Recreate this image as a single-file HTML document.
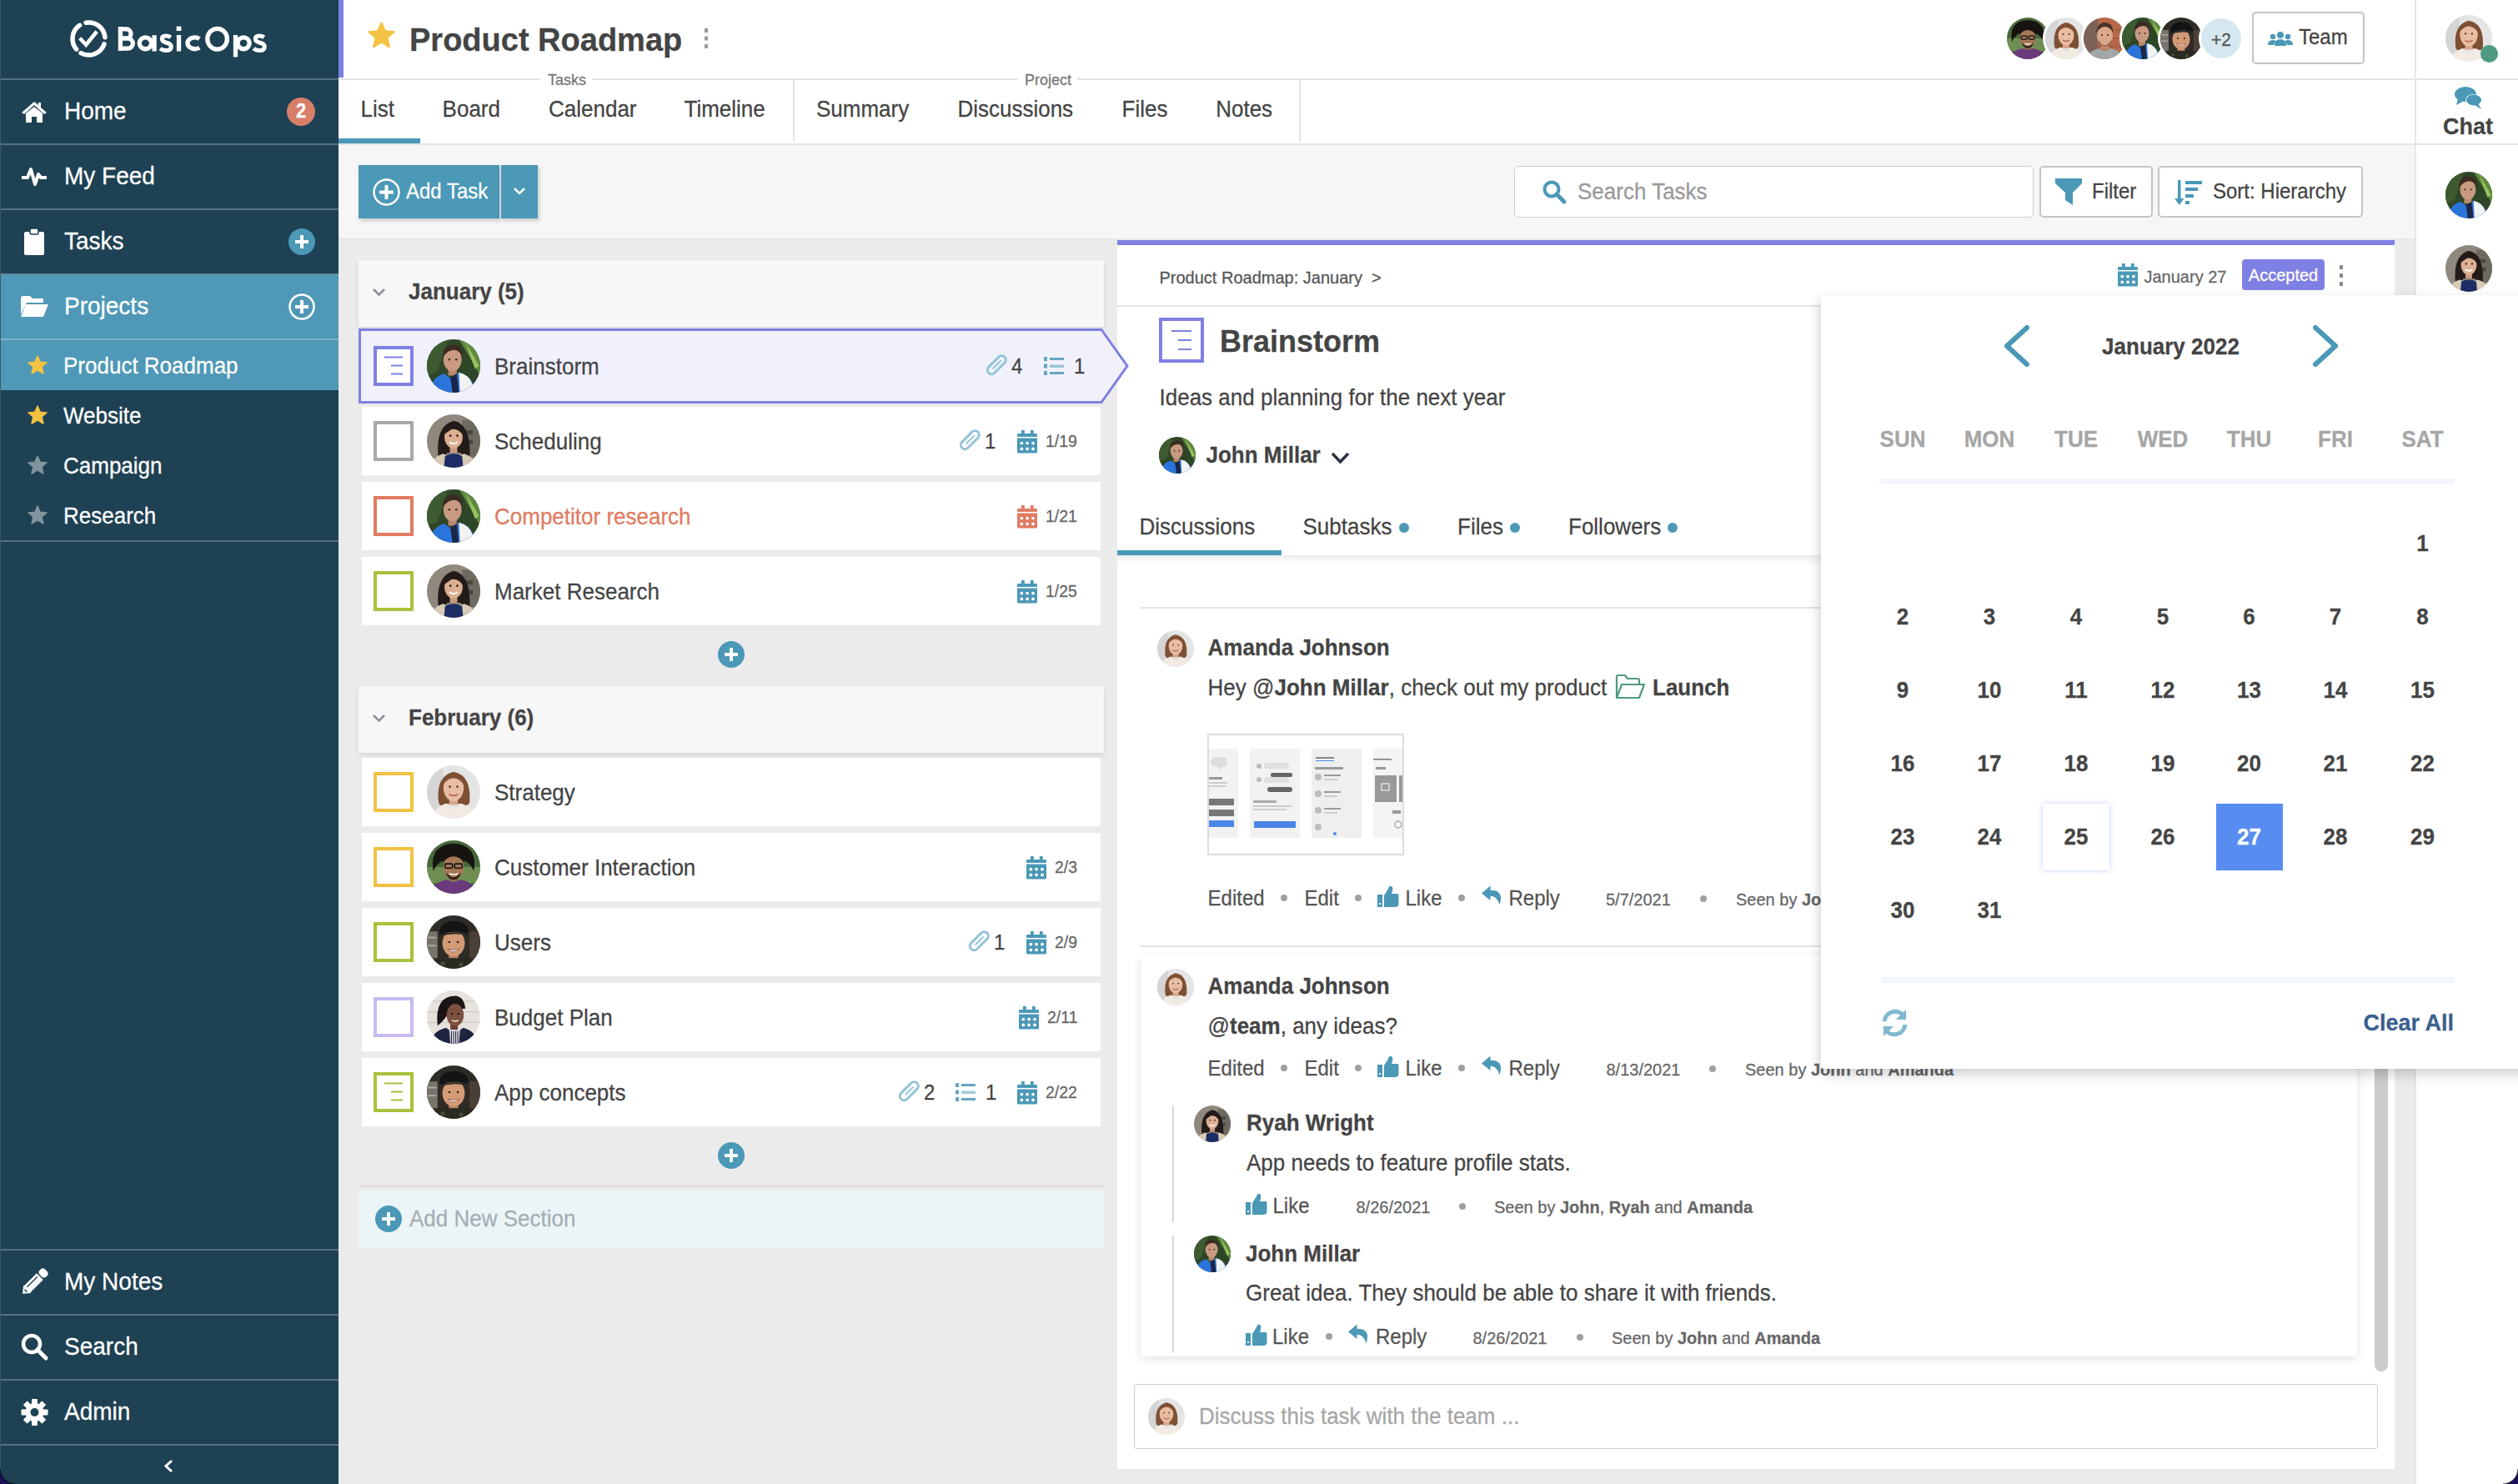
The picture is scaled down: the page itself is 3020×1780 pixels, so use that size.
<!DOCTYPE html><html><head><meta charset="utf-8"><style>
html,body{margin:0;padding:0;}
body{width:3020px;height:1780px;position:relative;overflow:hidden;background:#ebebeb;font-family:"Liberation Sans",sans-serif;}
.t{position:absolute;white-space:nowrap;line-height:1;transform:scaleY(1.045);transform-origin:0 84.65%;-webkit-text-stroke:0.25px currentColor;}
svg{overflow:visible}
</style></head><body>
<svg width="0" height="0" style="position:absolute"><defs>
<clipPath id="cc"><circle cx="50" cy="50" r="50"/></clipPath>
<g id="av-john" clip-path="url(#cc)"><rect width="100" height="100" fill="#2e4628"/><path d="M0 0 H40 L20 60 L0 70Z" fill="#3d5a30"/><path d="M60 0 H100 V70 Q85 40 60 0Z" fill="#5f8a3e"/><path d="M72 5 L98 50 L90 55 Z" fill="#a9cf6a" opacity=".8"/><path d="M82 0 L100 30 L100 12Z" fill="#c8e08a" opacity=".7"/><rect x="40" y="52" width="16" height="16" fill="#b8876c"/><ellipse cx="48" cy="38" rx="17" ry="22" fill="#c99a80"/><path d="M30 34 Q28 10 50 10 Q70 12 66 34 Q64 22 52 20 Q38 20 30 34Z" fill="#3b2b22"/><circle cx="42" cy="38" r="2" fill="#3a2a22"/><circle cx="55" cy="38" r="2" fill="#3a2a22"/><path d="M4 100 Q8 72 32 64 L46 74 L60 62 Q86 68 92 100Z" fill="#2b74dc"/><path d="M60 62 Q80 66 86 86 L74 100 L62 100 Z" fill="#f2f2f2"/><path d="M44 72 L56 64 L60 100 L48 100Z" fill="#1b2746"/></g>
<g id="av-amanda" clip-path="url(#cc)"><rect width="100" height="100" fill="#e4e4e4"/><rect x="0" y="0" width="30" height="100" fill="#d5d5d5"/><path d="M22 70 Q16 20 50 12 Q84 18 80 70 Q74 80 66 72 L34 72 Q26 80 22 70Z" fill="#7e4f33"/><rect x="42" y="58" width="16" height="16" fill="#d9a68a"/><ellipse cx="50" cy="42" rx="19" ry="25" fill="#e8bda2"/><path d="M31 36 Q34 16 52 16 Q68 18 70 38 Q62 24 48 24 Q38 26 31 36Z" fill="#7e4f33"/><circle cx="43" cy="40" r="2" fill="#4a3025"/><circle cx="57" cy="40" r="2" fill="#4a3025"/><path d="M42 54 Q50 60 58 54" stroke="#b45a50" stroke-width="2.5" fill="none"/><path d="M10 100 Q14 78 36 72 L50 84 L64 72 Q86 78 90 100Z" fill="#f1ebe4"/></g>
<g id="av-ryah" clip-path="url(#cc)"><rect width="100" height="100" fill="#8e887d"/><rect x="66" y="10" width="34" height="70" fill="#6e6a62"/><rect x="72" y="30" width="14" height="8" fill="#4a4640"/><rect x="72" y="48" width="14" height="8" fill="#4a4640"/><path d="M22 86 Q14 22 50 12 Q84 18 80 86 Q70 96 64 72 L38 72 Q30 96 22 86Z" fill="#221b19"/><rect x="43" y="58" width="14" height="14" fill="#c99a80"/><ellipse cx="50" cy="42" rx="17" ry="22" fill="#dcae92"/><path d="M32 38 Q34 18 52 18 Q66 20 68 40 Q60 26 46 28Z" fill="#221b19"/><circle cx="44" cy="40" r="2" fill="#2a1a15"/><circle cx="57" cy="40" r="2" fill="#2a1a15"/><path d="M42 52 Q50 58 58 52" stroke="#fff" stroke-width="3" fill="none"/><path d="M6 100 Q10 80 30 74 L50 80 L70 74 Q90 80 94 100Z" fill="#d8cbb5"/><path d="M34 78 Q50 70 66 78 L68 100 L32 100Z" fill="#1d2d66"/></g>
<g id="av-curly" clip-path="url(#cc)"><rect width="100" height="100" fill="#48683a"/><rect x="0" y="50" width="100" height="30" fill="#8aa866" opacity=".6"/><path d="M12 58 Q4 8 50 6 Q96 8 88 58 Q80 36 50 32 Q20 36 12 58Z" fill="#161311"/><rect x="42" y="62" width="16" height="14" fill="#94684a"/><ellipse cx="50" cy="50" rx="19" ry="23" fill="#a67756"/><path d="M30 42 Q30 18 50 18 Q72 18 70 42 Q62 30 50 30 Q38 30 30 42Z" fill="#161311"/><rect x="34" y="44" width="14" height="8" rx="2" fill="none" stroke="#111" stroke-width="2.5"/><rect x="52" y="44" width="14" height="8" rx="2" fill="none" stroke="#111" stroke-width="2.5"/><path d="M36 60 Q50 78 64 60 Q62 72 50 74 Q38 72 36 60Z" fill="#2a1e18"/><path d="M42 62 Q50 66 58 62" stroke="#fff" stroke-width="2.5" fill="none"/><path d="M4 100 Q10 80 36 74 L50 78 L64 74 Q90 80 96 100Z" fill="#6a3a7c"/></g>
<g id="av-cap" clip-path="url(#cc)"><rect width="100" height="100" fill="#2f2b27"/><rect x="0" y="30" width="20" height="50" fill="#77756a"/><rect x="2" y="40" width="16" height="3" fill="#aaa"/><rect x="2" y="55" width="16" height="3" fill="#aaa"/><rect x="80" y="30" width="20" height="50" fill="#4a4038"/><rect x="41" y="66" width="18" height="14" fill="#b98060"/><ellipse cx="50" cy="52" rx="21" ry="25" fill="#d39a76"/><path d="M24 36 Q22 12 50 11 Q78 11 78 34 Q50 27 24 36Z" fill="#141414"/><path d="M24 36 Q50 28 78 34 L78 38 Q50 31 24 40Z" fill="#2a2a2a"/><circle cx="42" cy="50" r="2" fill="#2a1a15"/><circle cx="58" cy="50" r="2" fill="#2a1a15"/><path d="M39 63 Q50 74 61 63 Q50 67 39 63Z" fill="#fff" stroke="#7a3a30" stroke-width="1"/><path d="M6 100 Q12 82 34 78 L50 84 L66 78 Q88 82 94 100Z" fill="#2a2a20"/><circle cx="30" cy="90" r="4" fill="#4a4a38"/><circle cx="64" cy="92" r="4" fill="#4a4a38"/></g>
<g id="av-budget" clip-path="url(#cc)"><rect width="100" height="100" fill="#e6e2dd"/><path d="M0 20 H100 M0 40 H100 M0 60 H100" stroke="#cfcac4" stroke-width="2"/><path d="M20 66 Q14 10 54 10 Q70 12 72 34 L44 36 Q34 56 20 66Z" fill="#1a1414"/><rect x="44" y="60" width="14" height="14" fill="#6a4032"/><ellipse cx="53" cy="46" rx="16" ry="21" fill="#7d5040"/><circle cx="47" cy="44" r="1.8" fill="#1a0e0a"/><circle cx="59" cy="44" r="1.8" fill="#1a0e0a"/><path d="M47 56 Q53 60 59 56" stroke="#fff" stroke-width="2" fill="none"/><path d="M6 100 Q10 76 36 70 L52 82 L68 70 Q92 76 96 100Z" fill="#1f2440"/><path d="M42 74 L62 74 L60 100 L44 100Z" fill="#e3e6ee"/><path d="M46 76 L46 100 M50 76 L50 100 M54 76 L54 100 M58 76 L58 100" stroke="#2a2a3a" stroke-width="1.8"/></g>
<g id="av-beard" clip-path="url(#cc)"><rect width="100" height="100" fill="#b7694a"/><path d="M0 30 H100 M0 50 H100 M0 70 H100" stroke="#8e4e36" stroke-width="2"/><rect x="0" y="0" width="34" height="100" fill="#7a6258"/><rect x="42" y="60" width="18" height="16" fill="#c49070"/><ellipse cx="51" cy="44" rx="19" ry="25" fill="#dba98a"/><path d="M31 36 Q32 12 52 12 Q72 14 70 36 Q64 22 50 22 Q38 24 31 36Z" fill="#4a3428"/><circle cx="44" cy="42" r="2" fill="#2a1a15"/><circle cx="58" cy="42" r="2" fill="#2a1a15"/><path d="M34 52 Q51 82 68 52 Q66 68 51 70 Q36 68 34 52Z" fill="#7e5e4c"/><path d="M6 100 Q12 80 36 74 L51 80 L66 74 Q90 80 94 100Z" fill="#a2a6a8"/></g>
</defs></svg>
<div style="position:absolute;left:0px;top:0px;width:406px;height:1780px;background:#1e4153;"></div>
<svg style="position:absolute;left:0px;top:0px;" width="340" height="90" viewBox="0 0 340 90"><g fill="none" stroke="#fff" stroke-linecap="round"><path d="M103.11 27.30 A19.5 19.5 0 0 1 125.93 44.80 M124.94 52.85 A19.5 19.5 0 0 1 97.05 63.56 M95.60 30.33 A19.5 19.5 0 0 0 91.56 59.03" stroke-width="5.5"/></g><path d="M95.7 45.8 L103.2 53.8 L116.1 37.8" stroke="#fff" stroke-width="4.6" fill="none"/><g fill="none" stroke="#fff" stroke-width="5.3"><path d="M144.4 32 V61 M141.8 34.9 H151.5 A5.55 5.55 0 0 1 151.5 46 H141.8 M151.5 46 H153.3 A6.05 6.05 0 0 1 153.3 58.1 H141.8"/><ellipse cx="174.4" cy="51.85" rx="7.2" ry="6.9"/><path d="M185.1 42.2 V61.5"/><path d="M204.8 44.8 Q202 42.9 199.2 42.9 Q194.3 42.9 194.3 46.6 Q194.3 50 199.6 51.2 Q205.3 52.5 205.3 56.3 Q205.3 60.6 199.4 60.6 Q195 60.6 192.2 58" stroke-width="5"/><path d="M214.5 42 V61.5"/><path d="M239.2 46.6 A8.6 6.9 0 1 0 239.2 57.1"/><ellipse cx="260.6" cy="46.7" rx="11.8" ry="12.4"/><path d="M282.5 42 V68.4"/><ellipse cx="292.1" cy="51.85" rx="7.1" ry="6.9"/><path d="M316.8 44.8 Q314 42.9 311.2 42.9 Q306.3 42.9 306.3 46.6 Q306.3 50 311.6 51.2 Q317.3 52.5 317.3 56.3 Q317.3 60.6 311.4 60.6 Q307 60.6 304.2 58" stroke-width="5"/></g><rect x="211.6" y="31.6" width="5.8" height="5.4" fill="#fff"/></svg>
<div style="position:absolute;left:0px;top:94px;width:406px;height:2px;background:#56717f;"></div>
<div style="position:absolute;left:0px;top:172px;width:406px;height:2px;background:#56717f;"></div>
<div style="position:absolute;left:0px;top:250px;width:406px;height:2px;background:#56717f;"></div>
<div style="position:absolute;left:0px;top:328px;width:406px;height:140px;background:#4f98b7;"></div>
<div style="position:absolute;left:0px;top:328px;width:406px;height:2px;background:#5f8a9c;"></div>
<div style="position:absolute;left:0px;top:406px;width:406px;height:2px;background:#7eb3c8;"></div>
<div style="position:absolute;left:0px;top:648px;width:406px;height:2px;background:#56717f;"></div>
<div style="position:absolute;left:0px;top:1498px;width:406px;height:2px;background:#56717f;"></div>
<div style="position:absolute;left:0px;top:1576px;width:406px;height:2px;background:#56717f;"></div>
<div style="position:absolute;left:0px;top:1654px;width:406px;height:2px;background:#56717f;"></div>
<div style="position:absolute;left:0px;top:1732px;width:406px;height:2px;background:#56717f;"></div>
<div class="t" style="left:77px;top:120.3px;font-size:28px;font-weight:400;color:#fff;">Home</div>
<div class="t" style="left:77px;top:198.3px;font-size:28px;font-weight:400;color:#fff;">My Feed</div>
<div class="t" style="left:77px;top:276.3px;font-size:28px;font-weight:400;color:#fff;">Tasks</div>
<div class="t" style="left:77px;top:354.3px;font-size:28px;font-weight:400;color:#fff;">Projects</div>
<div class="t" style="left:76px;top:426.0px;font-size:26px;font-weight:400;color:#fff;">Product Roadmap</div>
<div class="t" style="left:76px;top:486.0px;font-size:26px;font-weight:400;color:#fff;">Website</div>
<div class="t" style="left:76px;top:546.0px;font-size:26px;font-weight:400;color:#fff;">Campaign</div>
<div class="t" style="left:76px;top:606.0px;font-size:26px;font-weight:400;color:#fff;">Research</div>
<div class="t" style="left:77px;top:1524.3px;font-size:28px;font-weight:400;color:#fff;">My Notes</div>
<div class="t" style="left:77px;top:1602.3px;font-size:28px;font-weight:400;color:#fff;">Search</div>
<div class="t" style="left:77px;top:1680.3px;font-size:28px;font-weight:400;color:#fff;">Admin</div>
<div style="position:absolute;left:344px;top:117px;width:34px;height:34px;border-radius:50%;background:#d97f69;"></div>
<div class="t" style="left:-139px;width:1000px;text-align:center;top:123.4px;font-size:22px;font-weight:700;color:#fff;">2</div>
<svg style="position:absolute;left:346px;top:274px;" width="32" height="32" viewBox="0 0 32 32"><circle cx="16" cy="16" r="16" fill="#4b98b7"/><path d="M16 8 V24 M8 16 H24" stroke="#fff" stroke-width="4"/></svg>
<svg style="position:absolute;left:346px;top:352px;" width="32" height="32" viewBox="0 0 32 32"><circle cx="16" cy="16" r="14.5" fill="none" stroke="#fff" stroke-width="2.5"/><path d="M16 8 V24 M8 16 H24" stroke="#fff" stroke-width="4"/></svg>
<svg style="position:absolute;left:25px;top:120px;" width="32" height="28" viewBox="0 0 32 28"><path d="M16 2 L1 15 L4 17 L16 6 L28 17 L31 15 L24 9 V3 H21 V6 Z" fill="#fff"/><path d="M6 16 L16 8 L26 16 V27 H19 V20 H13 V27 H6 Z" fill="#fff"/></svg>
<svg style="position:absolute;left:25px;top:199px;" width="32" height="26" viewBox="0 0 32 26"><path d="M1 14 H8 L12 4 L17 22 L21 10 L24 14 H31" stroke="#fff" stroke-width="4" fill="none" stroke-linejoin="round"/></svg>
<svg style="position:absolute;left:29px;top:273px;" width="25" height="33" viewBox="0 0 25 33"><rect x="0" y="5" width="24" height="28" rx="2" fill="#fff"/><rect x="7" y="1" width="10" height="7" rx="2" fill="#fff" stroke="#1e4153" stroke-width="1.5"/></svg>
<svg style="position:absolute;left:25px;top:355px;" width="33" height="25" viewBox="0 0 33 25"><path d="M0 3 Q0 0 3 0 H11 L14 3 H27 V8 H7 L0 22Z" fill="#fff"/><path d="M6 10 H33 L27 25 H0Z" fill="#fff"/></svg>
<svg style="position:absolute;left:33px;top:426px;" width="24" height="24" viewBox="0 0 24 24"><path d="M12 1 L15.2 8.2 L23 8.9 L17.1 14 L18.9 22 L12 17.8 L5.1 22 L6.9 14 L1 8.9 L8.8 8.2Z" fill="#f4c242" stroke="#f4c242" stroke-width="1.5" stroke-linejoin="round"/></svg>
<svg style="position:absolute;left:33px;top:486px;" width="24" height="24" viewBox="0 0 24 24"><path d="M12 1 L15.2 8.2 L23 8.9 L17.1 14 L18.9 22 L12 17.8 L5.1 22 L6.9 14 L1 8.9 L8.8 8.2Z" fill="#f4c242" stroke="#f4c242" stroke-width="1.5" stroke-linejoin="round"/></svg>
<svg style="position:absolute;left:33px;top:546px;" width="24" height="24" viewBox="0 0 24 24"><path d="M12 1 L15.2 8.2 L23 8.9 L17.1 14 L18.9 22 L12 17.8 L5.1 22 L6.9 14 L1 8.9 L8.8 8.2Z" fill="#7f949e" stroke="#7f949e" stroke-width="1.5" stroke-linejoin="round"/></svg>
<svg style="position:absolute;left:33px;top:606px;" width="24" height="24" viewBox="0 0 24 24"><path d="M12 1 L15.2 8.2 L23 8.9 L17.1 14 L18.9 22 L12 17.8 L5.1 22 L6.9 14 L1 8.9 L8.8 8.2Z" fill="#7f949e" stroke="#7f949e" stroke-width="1.5" stroke-linejoin="round"/></svg>
<svg style="position:absolute;left:24px;top:1521px;" width="34" height="34" viewBox="0 0 34 34"><g transform="translate(17.5 16.5) rotate(-45)"><rect x="-13" y="-5.5" width="22" height="11" fill="#fff"/><rect x="10.5" y="-5.5" width="9" height="11" rx="4" fill="#fff"/><path d="M-13 -5.5 L-19.5 0 L-13 5.5Z" fill="#fff" stroke="#fff" stroke-width="1" stroke-linejoin="miter"/><path d="M-11 -2 H7" stroke="#1e4153" stroke-width="1.4"/><path d="M-15 -2 L-15 2" stroke="#1e4153" stroke-width="1.6"/></g></svg>
<svg style="position:absolute;left:25px;top:1599px;" width="33" height="34" viewBox="0 0 33 34"><circle cx="13" cy="13" r="10" stroke="#fff" stroke-width="4.5" fill="none"/><path d="M20 20 L30 30" stroke="#fff" stroke-width="5" stroke-linecap="round"/></svg>
<svg style="position:absolute;left:25px;top:1677px;" width="33" height="34" viewBox="0 0 33 34"><g fill="#fff"><circle cx="16.5" cy="17" r="11"/><rect x="13" y="1" width="7" height="32" rx="1"/><rect x="0.5" y="13.5" width="32" height="7" rx="1"/><rect x="13" y="1" width="7" height="32" rx="1" transform="rotate(45 16.5 17)"/><rect x="13" y="1" width="7" height="32" rx="1" transform="rotate(-45 16.5 17)"/></g><circle cx="16.5" cy="17" r="5" fill="#1e4153"/></svg>
<svg style="position:absolute;left:195px;top:1750px;" width="14" height="17" viewBox="0 0 14 17"><path d="M11 2 L4 8.5 L11 15" stroke="#fff" stroke-width="3" fill="none"/></svg>
<div style="position:absolute;left:406px;top:0px;width:2614px;height:94px;background:#fff;"></div>
<div style="position:absolute;left:406px;top:0px;width:6px;height:93px;background:#7f80e3;"></div>
<svg style="position:absolute;left:441px;top:26px;" width="33" height="33" viewBox="0 0 24 24"><path d="M12 1 L15.2 8.2 L23 8.9 L17.1 14 L18.9 22 L12 17.8 L5.1 22 L6.9 14 L1 8.9 L8.8 8.2Z" fill="#f4c242" stroke="#f4c242" stroke-width="1.5" stroke-linejoin="round"/></svg>
<div class="t" style="left:491px;top:28.8px;font-size:38px;font-weight:700;color:#444;">Product Roadmap</div>
<svg style="position:absolute;left:843px;top:34px;" width="8" height="24" viewBox="0 0 8 24"><rect x="2" y="0" width="4" height="5" fill="#999"/><rect x="2" y="9.5" width="4" height="5" fill="#999"/><rect x="2" y="19" width="4" height="5" fill="#999"/></svg>
<div style="position:absolute;left:2403.7px;top:18.0px;width:56px;height:56px;border-radius:50%;background:#fff;"></div>
<svg style="position:absolute;left:2406.7px;top:21.0px" width="50" height="50" viewBox="0 0 100 100"><use href="#av-curly"/></svg>
<div style="position:absolute;left:2449.7px;top:18.0px;width:56px;height:56px;border-radius:50%;background:#fff;"></div>
<svg style="position:absolute;left:2452.7px;top:21.0px" width="50" height="50" viewBox="0 0 100 100"><use href="#av-amanda"/></svg>
<div style="position:absolute;left:2495.7px;top:18.0px;width:56px;height:56px;border-radius:50%;background:#fff;"></div>
<svg style="position:absolute;left:2498.7px;top:21.0px" width="50" height="50" viewBox="0 0 100 100"><use href="#av-beard"/></svg>
<div style="position:absolute;left:2541.7px;top:18.0px;width:56px;height:56px;border-radius:50%;background:#fff;"></div>
<svg style="position:absolute;left:2544.7px;top:21.0px" width="50" height="50" viewBox="0 0 100 100"><use href="#av-john"/></svg>
<div style="position:absolute;left:2587.7px;top:18.0px;width:56px;height:56px;border-radius:50%;background:#fff;"></div>
<svg style="position:absolute;left:2590.7px;top:21.0px" width="50" height="50" viewBox="0 0 100 100"><use href="#av-cap"/></svg>
<div style="position:absolute;left:2637px;top:19px;width:54px;height:54px;border-radius:50%;background:#fff;"></div>
<div style="position:absolute;left:2640px;top:22px;width:48px;height:48px;border-radius:50%;background:#d6e8ef;"></div>
<div class="t" style="left:2164px;width:1000px;text-align:center;top:37.2px;font-size:21px;font-weight:400;color:#555;">+2</div>
<div style="position:absolute;left:2701px;top:14px;width:135px;height:63px;box-sizing:border-box;border:2px solid #c4c4c4;border-radius:5px;background:#fff;"></div>
<svg style="position:absolute;left:2720px;top:38px;" width="30" height="17" viewBox="0 0 30 17"><g fill="#4b98b7"><circle cx="15" cy="4" r="4"/><circle cx="6" cy="6" r="3.2"/><circle cx="24" cy="6" r="3.2"/><path d="M8 17 Q8 9 15 9 Q22 9 22 17Z"/><path d="M0 16 Q0 10 6 10 Q9 10 10 12 Q7 14 7 16Z"/><path d="M30 16 Q30 10 24 10 Q21 10 20 12 Q23 14 23 16Z"/></g></svg>
<div class="t" style="left:2757px;top:32.7px;font-size:24px;font-weight:400;color:#444;">Team</div>
<div style="position:absolute;left:406px;top:94px;width:2614px;height:2px;background:#e4e4e4;"></div>
<div style="position:absolute;left:406px;top:96px;width:2491px;height:77px;background:#fff;"></div>
<div style="position:absolute;left:648px;top:90px;width:62px;height:10px;background:#fff;"></div>
<div class="t" style="left:657px;top:86.8px;font-size:18px;font-weight:400;color:#777;">Tasks</div>
<div style="position:absolute;left:1220px;top:90px;width:72px;height:10px;background:#fff;"></div>
<div class="t" style="left:1229px;top:86.8px;font-size:18px;font-weight:400;color:#777;">Project</div>
<div style="position:absolute;left:951px;top:96px;width:2px;height:74px;background:#e4e4e4;"></div>
<div style="position:absolute;left:1558px;top:96px;width:2px;height:74px;background:#e4e4e4;"></div>
<div class="t" style="left:432.6px;top:118.0px;font-size:26px;font-weight:400;color:#444;">List</div>
<div class="t" style="left:530.6px;top:118.0px;font-size:26px;font-weight:400;color:#444;">Board</div>
<div class="t" style="left:658px;top:118.0px;font-size:26px;font-weight:400;color:#444;">Calendar</div>
<div class="t" style="left:820.5px;top:118.0px;font-size:26px;font-weight:400;color:#444;">Timeline</div>
<div class="t" style="left:979px;top:118.0px;font-size:26px;font-weight:400;color:#444;">Summary</div>
<div class="t" style="left:1148.4px;top:118.0px;font-size:26px;font-weight:400;color:#444;">Discussions</div>
<div class="t" style="left:1345.5px;top:118.0px;font-size:26px;font-weight:400;color:#444;">Files</div>
<div class="t" style="left:1458.2px;top:118.0px;font-size:26px;font-weight:400;color:#444;">Notes</div>
<div style="position:absolute;left:406px;top:166px;width:98px;height:6px;background:#4b98b7;"></div>
<div style="position:absolute;left:406px;top:172px;width:2491px;height:2px;background:#e4e4e4;"></div>
<div style="position:absolute;left:2897px;top:96px;width:123px;height:1684px;background:#fff;"></div>
<div style="position:absolute;left:2896px;top:0px;width:2px;height:1780px;background:#e6e6e6;"></div>
<div style="position:absolute;left:2897px;top:172px;width:123px;height:2px;background:#e4e4e4;"></div>
<svg style="position:absolute;left:2933.0px;top:18.0px" width="56" height="56" viewBox="0 0 100 100"><use href="#av-amanda"/></svg>
<div style="position:absolute;left:2975px;top:54px;width:21px;height:21px;border-radius:50%;background:#4f9a82;"></div>
<svg style="position:absolute;left:2944px;top:104px;" width="34" height="28" viewBox="0 0 34 28"><g fill="#4b98b7"><ellipse cx="13" cy="9" rx="13" ry="9"/><path d="M4 14 L2 22 L11 17Z"/><ellipse cx="23" cy="16" rx="10" ry="7" fill="#fff"/><ellipse cx="23" cy="16" rx="9" ry="6.5"/><path d="M28 20 L32 27 L24 22Z"/></g></svg>
<div class="t" style="left:2930px;top:139.1px;font-size:27px;font-weight:700;color:#444;">Chat</div>
<svg style="position:absolute;left:2933.0px;top:206.0px" width="56" height="56" viewBox="0 0 100 100"><use href="#av-john"/></svg>
<svg style="position:absolute;left:2933.0px;top:294.0px" width="56" height="56" viewBox="0 0 100 100"><use href="#av-ryah"/></svg>
<div style="position:absolute;left:406px;top:174px;width:2490px;height:112px;background:#f6f6f6;"></div>
<div style="position:absolute;left:406px;top:286px;width:2490px;height:1px;background:#e2e2e2;"></div>
<div style="position:absolute;left:430px;top:198px;width:169px;height:64px;background:#4b98b7;box-shadow:2px 3px 5px rgba(0,0,0,.18);"></div>
<div style="position:absolute;left:601px;top:198px;width:44px;height:64px;background:#4b98b7;box-shadow:2px 3px 5px rgba(0,0,0,.18);"></div>
<svg style="position:absolute;left:447px;top:214px;" width="33" height="33" viewBox="0 0 33 33"><circle cx="16.5" cy="16.5" r="15" fill="none" stroke="#fff" stroke-width="2.5"/><path d="M16.5 8 V25 M8 16.5 H25" stroke="#fff" stroke-width="4"/></svg>
<div class="t" style="left:487px;top:217.7px;font-size:24px;font-weight:400;color:#fff;">Add Task</div>
<svg style="position:absolute;left:615px;top:224px;" width="16" height="12" viewBox="0 0 16 12"><path d="M2 2 L8 8 L14 2" stroke="#fff" stroke-width="2.5" fill="none"/></svg>
<div style="position:absolute;left:1816px;top:199px;width:623px;height:62px;box-sizing:border-box;border:1.5px solid #cdcdcd;border-radius:5px;background:#fff;"></div>
<svg style="position:absolute;left:1850px;top:216px;" width="30" height="29" viewBox="0 0 30 29"><circle cx="11" cy="11" r="8.5" stroke="#4b98b7" stroke-width="4" fill="none"/><path d="M17 17 L26 26" stroke="#4b98b7" stroke-width="5" stroke-linecap="round"/></svg>
<div class="t" style="left:1892px;top:217.0px;font-size:26px;font-weight:400;color:#999;">Search Tasks</div>
<div style="position:absolute;left:2446px;top:199px;width:136px;height:62px;box-sizing:border-box;border:2px solid #c4c4c4;border-radius:5px;background:#fff;"></div>
<svg style="position:absolute;left:2465px;top:214px;" width="33" height="32" viewBox="0 0 33 32"><path d="M0 0 H32 V6 L21 17 V32 L12 26 V17 L0 6Z" fill="#4b98b7"/></svg>
<div class="t" style="left:2509px;top:217.7px;font-size:24px;font-weight:400;color:#444;">Filter</div>
<div style="position:absolute;left:2588px;top:199px;width:246px;height:62px;box-sizing:border-box;border:2px solid #c4c4c4;border-radius:5px;background:#fff;"></div>
<svg style="position:absolute;left:2608px;top:216px;" width="34" height="30" viewBox="0 0 34 30"><g fill="#4b98b7"><rect x="4" y="0" width="3.5" height="24"/><path d="M0 22 H11.5 L5.75 30Z"/><rect x="13" y="1" width="20" height="4"/><rect x="13" y="9" width="15" height="4"/><rect x="13" y="17" width="10" height="4"/><rect x="13" y="25" width="5" height="4"/></g></svg>
<div class="t" style="left:2654px;top:217.7px;font-size:24px;font-weight:400;color:#444;">Sort: Hierarchy</div>
<div style="position:absolute;left:430px;top:312px;width:894px;height:80px;background:#f7f7f7;box-shadow:0 3px 5px rgba(0,0,0,.09);"></div>
<svg style="position:absolute;left:446px;top:345px;" width="17" height="11" viewBox="0 0 17 11"><path d="M2 2 L8.5 8.5 L15 2" stroke="#8a8f99" stroke-width="2.5" fill="none"/></svg>
<div class="t" style="left:490px;top:337.0px;font-size:26px;font-weight:700;color:#444;">January (5)</div>
<svg style="position:absolute;left:430px;top:394px;" width="926" height="90" viewBox="0 0 926 90"><path d="M1.5 1.5 H891 L922 45 L891 88.5 H1.5Z" fill="#f1f1fc" stroke="#7f80e3" stroke-width="3"/></svg>
<div style="position:absolute;left:448px;top:415px;width:48px;height:48px;box-sizing:border-box;border:4px solid #7f80e3;background:#fff;"></div>
<svg style="position:absolute;left:448px;top:415px;" width="48" height="48" viewBox="0 0 48 48"><path d="M13 13.5 H35 M21 23.5 H35 M21 33.5 H35" stroke="#7f80e3" stroke-width="2.2"/></svg>
<svg style="position:absolute;left:512.0px;top:407.0px" width="64" height="64" viewBox="0 0 100 100"><use href="#av-john"/></svg>
<div class="t" style="left:593px;top:426.5px;font-size:26px;font-weight:400;color:#444;">Brainstorm</div>
<svg style="position:absolute;left:1183px;top:425px;" width="24" height="26" viewBox="0 0 24 26"><g transform="rotate(45 12 13)"><rect x="7" y="-1" width="10" height="27" rx="5" fill="none" stroke="#94c4d6" stroke-width="3"/><path d="M12 5 V19" stroke="#94c4d6" stroke-width="2"/></g></svg>
<div class="t" style="left:1213px;top:427.7px;font-size:24px;font-weight:400;color:#444;">4</div>
<svg style="position:absolute;left:1252px;top:428px;" width="24" height="22" viewBox="0 0 24 22"><g fill="#4b98b7" opacity=".85"><rect x="0" y="0" width="4" height="5"/><rect x="0" y="8.5" width="4" height="5"/><rect x="0" y="17" width="4" height="5"/><rect x="7" y="1" width="17" height="3"/><rect x="7" y="9.5" width="17" height="3.5" opacity=".6"/><rect x="7" y="18" width="17" height="3"/></g></svg>
<div class="t" style="left:1288px;top:427.7px;font-size:24px;font-weight:400;color:#444;">1</div>
<div style="position:absolute;left:434px;top:488px;width:886px;height:82px;background:#fff;"></div>
<div style="position:absolute;left:448px;top:505px;width:48px;height:48px;box-sizing:border-box;border:4px solid #a9a9a9;background:#fff;"></div>
<svg style="position:absolute;left:512.0px;top:497.0px" width="64" height="64" viewBox="0 0 100 100"><use href="#av-ryah"/></svg>
<div class="t" style="left:593px;top:516.5px;font-size:26px;font-weight:400;color:#444;">Scheduling</div>
<svg style="position:absolute;left:1151px;top:515px;" width="24" height="26" viewBox="0 0 24 26"><g transform="rotate(45 12 13)"><rect x="7" y="-1" width="10" height="27" rx="5" fill="none" stroke="#94c4d6" stroke-width="3"/><path d="M12 5 V19" stroke="#94c4d6" stroke-width="2"/></g></svg>
<div class="t" style="left:1181px;top:517.7px;font-size:24px;font-weight:400;color:#444;">1</div>
<svg style="position:absolute;left:1220.3px;top:516.2px;" width="24" height="28" viewBox="0 0 24 28"><g fill="#4b98b7"><rect x="5" y="0" width="3.8" height="5"/><rect x="15.9" y="0" width="3.8" height="5"/><path d="M0 9 Q0 4 3 4 H21 Q24 4 24 9 V7.8 H0Z"/><rect x="0" y="4" width="24" height="3.8" rx="1.2"/><path d="M0 9.4 H24 V26 Q24 27.6 22.4 27.6 H1.6 Q0 27.6 0 26Z"/></g><g fill="#fff"><circle cx="5.3" cy="15.6" r="1.9"/><circle cx="12.1" cy="15.6" r="1.9"/><circle cx="19" cy="15.6" r="1.9"/><circle cx="5.3" cy="22.4" r="1.9"/><circle cx="12.1" cy="22.4" r="1.9"/><circle cx="19" cy="22.4" r="1.9"/></g></svg>
<div class="t" style="left:1254px;top:520.0px;font-size:19.5px;font-weight:400;color:#666;">1/19</div>
<div style="position:absolute;left:434px;top:578px;width:886px;height:82px;background:#fff;"></div>
<div style="position:absolute;left:448px;top:595px;width:48px;height:48px;box-sizing:border-box;border:4px solid #e07b61;background:#fff;"></div>
<svg style="position:absolute;left:512.0px;top:587.0px" width="64" height="64" viewBox="0 0 100 100"><use href="#av-john"/></svg>
<div class="t" style="left:593px;top:606.5px;font-size:26px;font-weight:400;color:#e07b61;">Competitor research</div>
<svg style="position:absolute;left:1220.3px;top:606.2px;" width="24" height="28" viewBox="0 0 24 28"><g fill="#e07b61"><rect x="5" y="0" width="3.8" height="5"/><rect x="15.9" y="0" width="3.8" height="5"/><path d="M0 9 Q0 4 3 4 H21 Q24 4 24 9 V7.8 H0Z"/><rect x="0" y="4" width="24" height="3.8" rx="1.2"/><path d="M0 9.4 H24 V26 Q24 27.6 22.4 27.6 H1.6 Q0 27.6 0 26Z"/></g><g fill="#fff"><circle cx="5.3" cy="15.6" r="1.9"/><circle cx="12.1" cy="15.6" r="1.9"/><circle cx="19" cy="15.6" r="1.9"/><circle cx="5.3" cy="22.4" r="1.9"/><circle cx="12.1" cy="22.4" r="1.9"/><circle cx="19" cy="22.4" r="1.9"/></g></svg>
<div class="t" style="left:1254px;top:610.0px;font-size:19.5px;font-weight:400;color:#666;">1/21</div>
<div style="position:absolute;left:434px;top:668px;width:886px;height:82px;background:#fff;"></div>
<div style="position:absolute;left:448px;top:685px;width:48px;height:48px;box-sizing:border-box;border:4px solid #a7c23d;background:#fff;"></div>
<svg style="position:absolute;left:512.0px;top:677.0px" width="64" height="64" viewBox="0 0 100 100"><use href="#av-ryah"/></svg>
<div class="t" style="left:593px;top:696.5px;font-size:26px;font-weight:400;color:#444;">Market Research</div>
<svg style="position:absolute;left:1220.3px;top:696.2px;" width="24" height="28" viewBox="0 0 24 28"><g fill="#4b98b7"><rect x="5" y="0" width="3.8" height="5"/><rect x="15.9" y="0" width="3.8" height="5"/><path d="M0 9 Q0 4 3 4 H21 Q24 4 24 9 V7.8 H0Z"/><rect x="0" y="4" width="24" height="3.8" rx="1.2"/><path d="M0 9.4 H24 V26 Q24 27.6 22.4 27.6 H1.6 Q0 27.6 0 26Z"/></g><g fill="#fff"><circle cx="5.3" cy="15.6" r="1.9"/><circle cx="12.1" cy="15.6" r="1.9"/><circle cx="19" cy="15.6" r="1.9"/><circle cx="5.3" cy="22.4" r="1.9"/><circle cx="12.1" cy="22.4" r="1.9"/><circle cx="19" cy="22.4" r="1.9"/></g></svg>
<div class="t" style="left:1254px;top:700.0px;font-size:19.5px;font-weight:400;color:#666;">1/25</div>
<svg style="position:absolute;left:861px;top:769px;" width="32" height="32" viewBox="0 0 32 32"><circle cx="16" cy="16" r="16" fill="#4b98b7"/><path d="M16 8 V24 M8 16 H24" stroke="#fff" stroke-width="4"/></svg>
<div style="position:absolute;left:430px;top:823px;width:894px;height:80px;background:#f7f7f7;box-shadow:0 3px 5px rgba(0,0,0,.09);"></div>
<svg style="position:absolute;left:446px;top:856px;" width="17" height="11" viewBox="0 0 17 11"><path d="M2 2 L8.5 8.5 L15 2" stroke="#8a8f99" stroke-width="2.5" fill="none"/></svg>
<div class="t" style="left:490px;top:848.0px;font-size:26px;font-weight:700;color:#444;">February (6)</div>
<div style="position:absolute;left:434px;top:909px;width:886px;height:82px;background:#fff;"></div>
<div style="position:absolute;left:448px;top:926px;width:48px;height:48px;box-sizing:border-box;border:4px solid #f2c141;background:#fff;"></div>
<svg style="position:absolute;left:512.0px;top:918.0px" width="64" height="64" viewBox="0 0 100 100"><use href="#av-amanda"/></svg>
<div class="t" style="left:593px;top:937.5px;font-size:26px;font-weight:400;color:#444;">Strategy</div>
<div style="position:absolute;left:434px;top:999px;width:886px;height:82px;background:#fff;"></div>
<div style="position:absolute;left:448px;top:1016px;width:48px;height:48px;box-sizing:border-box;border:4px solid #f2c141;background:#fff;"></div>
<svg style="position:absolute;left:512.0px;top:1008.0px" width="64" height="64" viewBox="0 0 100 100"><use href="#av-curly"/></svg>
<div class="t" style="left:593px;top:1027.5px;font-size:26px;font-weight:400;color:#444;">Customer Interaction</div>
<svg style="position:absolute;left:1231.3px;top:1027.2px;" width="24" height="28" viewBox="0 0 24 28"><g fill="#4b98b7"><rect x="5" y="0" width="3.8" height="5"/><rect x="15.9" y="0" width="3.8" height="5"/><path d="M0 9 Q0 4 3 4 H21 Q24 4 24 9 V7.8 H0Z"/><rect x="0" y="4" width="24" height="3.8" rx="1.2"/><path d="M0 9.4 H24 V26 Q24 27.6 22.4 27.6 H1.6 Q0 27.6 0 26Z"/></g><g fill="#fff"><circle cx="5.3" cy="15.6" r="1.9"/><circle cx="12.1" cy="15.6" r="1.9"/><circle cx="19" cy="15.6" r="1.9"/><circle cx="5.3" cy="22.4" r="1.9"/><circle cx="12.1" cy="22.4" r="1.9"/><circle cx="19" cy="22.4" r="1.9"/></g></svg>
<div class="t" style="left:1265px;top:1031.0px;font-size:19.5px;font-weight:400;color:#666;">2/3</div>
<div style="position:absolute;left:434px;top:1089px;width:886px;height:82px;background:#fff;"></div>
<div style="position:absolute;left:448px;top:1106px;width:48px;height:48px;box-sizing:border-box;border:4px solid #a7c23d;background:#fff;"></div>
<svg style="position:absolute;left:512.0px;top:1098.0px" width="64" height="64" viewBox="0 0 100 100"><use href="#av-cap"/></svg>
<div class="t" style="left:593px;top:1117.5px;font-size:26px;font-weight:400;color:#444;">Users</div>
<svg style="position:absolute;left:1162px;top:1116px;" width="24" height="26" viewBox="0 0 24 26"><g transform="rotate(45 12 13)"><rect x="7" y="-1" width="10" height="27" rx="5" fill="none" stroke="#94c4d6" stroke-width="3"/><path d="M12 5 V19" stroke="#94c4d6" stroke-width="2"/></g></svg>
<div class="t" style="left:1192px;top:1118.7px;font-size:24px;font-weight:400;color:#444;">1</div>
<svg style="position:absolute;left:1231.3px;top:1117.2px;" width="24" height="28" viewBox="0 0 24 28"><g fill="#4b98b7"><rect x="5" y="0" width="3.8" height="5"/><rect x="15.9" y="0" width="3.8" height="5"/><path d="M0 9 Q0 4 3 4 H21 Q24 4 24 9 V7.8 H0Z"/><rect x="0" y="4" width="24" height="3.8" rx="1.2"/><path d="M0 9.4 H24 V26 Q24 27.6 22.4 27.6 H1.6 Q0 27.6 0 26Z"/></g><g fill="#fff"><circle cx="5.3" cy="15.6" r="1.9"/><circle cx="12.1" cy="15.6" r="1.9"/><circle cx="19" cy="15.6" r="1.9"/><circle cx="5.3" cy="22.4" r="1.9"/><circle cx="12.1" cy="22.4" r="1.9"/><circle cx="19" cy="22.4" r="1.9"/></g></svg>
<div class="t" style="left:1265px;top:1121.0px;font-size:19.5px;font-weight:400;color:#666;">2/9</div>
<div style="position:absolute;left:434px;top:1179px;width:886px;height:82px;background:#fff;"></div>
<div style="position:absolute;left:448px;top:1196px;width:48px;height:48px;box-sizing:border-box;border:4px solid #c9baf2;background:#fff;"></div>
<svg style="position:absolute;left:512.0px;top:1188.0px" width="64" height="64" viewBox="0 0 100 100"><use href="#av-budget"/></svg>
<div class="t" style="left:593px;top:1207.5px;font-size:26px;font-weight:400;color:#444;">Budget Plan</div>
<svg style="position:absolute;left:1222.3px;top:1207.2px;" width="24" height="28" viewBox="0 0 24 28"><g fill="#4b98b7"><rect x="5" y="0" width="3.8" height="5"/><rect x="15.9" y="0" width="3.8" height="5"/><path d="M0 9 Q0 4 3 4 H21 Q24 4 24 9 V7.8 H0Z"/><rect x="0" y="4" width="24" height="3.8" rx="1.2"/><path d="M0 9.4 H24 V26 Q24 27.6 22.4 27.6 H1.6 Q0 27.6 0 26Z"/></g><g fill="#fff"><circle cx="5.3" cy="15.6" r="1.9"/><circle cx="12.1" cy="15.6" r="1.9"/><circle cx="19" cy="15.6" r="1.9"/><circle cx="5.3" cy="22.4" r="1.9"/><circle cx="12.1" cy="22.4" r="1.9"/><circle cx="19" cy="22.4" r="1.9"/></g></svg>
<div class="t" style="left:1256px;top:1211.0px;font-size:19.5px;font-weight:400;color:#666;">2/11</div>
<div style="position:absolute;left:434px;top:1269px;width:886px;height:82px;background:#fff;"></div>
<div style="position:absolute;left:448px;top:1286px;width:48px;height:48px;box-sizing:border-box;border:4px solid #a7c23d;background:#fff;"></div>
<svg style="position:absolute;left:448px;top:1286px;" width="48" height="48" viewBox="0 0 48 48"><path d="M13 13.5 H35 M21 23.5 H35 M21 33.5 H35" stroke="#a7c23d" stroke-width="2.2"/></svg>
<svg style="position:absolute;left:512.0px;top:1278.0px" width="64" height="64" viewBox="0 0 100 100"><use href="#av-cap"/></svg>
<div class="t" style="left:593px;top:1297.5px;font-size:26px;font-weight:400;color:#444;">App concepts</div>
<svg style="position:absolute;left:1078px;top:1296px;" width="24" height="26" viewBox="0 0 24 26"><g transform="rotate(45 12 13)"><rect x="7" y="-1" width="10" height="27" rx="5" fill="none" stroke="#94c4d6" stroke-width="3"/><path d="M12 5 V19" stroke="#94c4d6" stroke-width="2"/></g></svg>
<div class="t" style="left:1108px;top:1298.7px;font-size:24px;font-weight:400;color:#444;">2</div>
<svg style="position:absolute;left:1146px;top:1299px;" width="24" height="22" viewBox="0 0 24 22"><g fill="#4b98b7" opacity=".85"><rect x="0" y="0" width="4" height="5"/><rect x="0" y="8.5" width="4" height="5"/><rect x="0" y="17" width="4" height="5"/><rect x="7" y="1" width="17" height="3"/><rect x="7" y="9.5" width="17" height="3.5" opacity=".6"/><rect x="7" y="18" width="17" height="3"/></g></svg>
<div class="t" style="left:1182px;top:1298.7px;font-size:24px;font-weight:400;color:#444;">1</div>
<svg style="position:absolute;left:1220.3px;top:1297.2px;" width="24" height="28" viewBox="0 0 24 28"><g fill="#4b98b7"><rect x="5" y="0" width="3.8" height="5"/><rect x="15.9" y="0" width="3.8" height="5"/><path d="M0 9 Q0 4 3 4 H21 Q24 4 24 9 V7.8 H0Z"/><rect x="0" y="4" width="24" height="3.8" rx="1.2"/><path d="M0 9.4 H24 V26 Q24 27.6 22.4 27.6 H1.6 Q0 27.6 0 26Z"/></g><g fill="#fff"><circle cx="5.3" cy="15.6" r="1.9"/><circle cx="12.1" cy="15.6" r="1.9"/><circle cx="19" cy="15.6" r="1.9"/><circle cx="5.3" cy="22.4" r="1.9"/><circle cx="12.1" cy="22.4" r="1.9"/><circle cx="19" cy="22.4" r="1.9"/></g></svg>
<div class="t" style="left:1254px;top:1301.0px;font-size:19.5px;font-weight:400;color:#666;">2/22</div>
<svg style="position:absolute;left:861px;top:1370px;" width="32" height="32" viewBox="0 0 32 32"><circle cx="16" cy="16" r="16" fill="#4b98b7"/><path d="M16 8 V24 M8 16 H24" stroke="#fff" stroke-width="4"/></svg>
<div style="position:absolute;left:430px;top:1422px;width:894px;height:2px;background:#dcdcdc;"></div>
<div style="position:absolute;left:430px;top:1428px;width:894px;height:68px;background:#ebf5f8;"></div>
<svg style="position:absolute;left:450px;top:1446px;" width="32" height="32" viewBox="0 0 32 32"><circle cx="16" cy="16" r="16" fill="#4b98b7"/><path d="M16 8 V24 M8 16 H24" stroke="#fff" stroke-width="4"/></svg>
<div class="t" style="left:491px;top:1449.0px;font-size:26px;font-weight:400;color:#a6adb3;">Add New Section</div>
<div style="position:absolute;left:1340px;top:288px;width:1532px;height:1474px;background:#fff;"></div>
<div style="position:absolute;left:1340px;top:288px;width:1532px;height:6px;background:#7f80e3;"></div>
<div class="t" style="left:1390.5px;top:323.1px;font-size:20px;font-weight:400;color:#555;">Product Roadmap: January&nbsp;&nbsp;&gt;</div>
<svg style="position:absolute;left:2539.8px;top:316.2px;" width="24" height="28" viewBox="0 0 24 28"><g fill="#4b98b7"><rect x="5" y="0" width="3.8" height="5"/><rect x="15.9" y="0" width="3.8" height="5"/><path d="M0 9 Q0 4 3 4 H21 Q24 4 24 9 V7.8 H0Z"/><rect x="0" y="4" width="24" height="3.8" rx="1.2"/><path d="M0 9.4 H24 V26 Q24 27.6 22.4 27.6 H1.6 Q0 27.6 0 26Z"/></g><g fill="#fff"><circle cx="5.3" cy="15.6" r="1.9"/><circle cx="12.1" cy="15.6" r="1.9"/><circle cx="19" cy="15.6" r="1.9"/><circle cx="5.3" cy="22.4" r="1.9"/><circle cx="12.1" cy="22.4" r="1.9"/><circle cx="19" cy="22.4" r="1.9"/></g></svg>
<div class="t" style="left:2571.5px;top:322.1px;font-size:20px;font-weight:400;color:#666;">January 27</div>
<div style="position:absolute;left:2689px;top:311px;width:99px;height:37px;background:#7f80e3;border-radius:4px;"></div>
<div class="t" style="left:2238.5px;width:1000px;text-align:center;top:320.1px;font-size:20px;font-weight:400;color:#fff;">Accepted</div>
<svg style="position:absolute;left:2806px;top:318px;" width="6" height="25" viewBox="0 0 6 25"><rect x="0" y="0" width="4" height="5" fill="#8a8a8a"/><rect x="0" y="10" width="4" height="5" fill="#8a8a8a"/><rect x="0" y="20" width="4" height="5" fill="#8a8a8a"/></svg>
<div style="position:absolute;left:1340px;top:366px;width:1532px;height:2px;background:#e6e6e6;"></div>
<div style="position:absolute;left:1390px;top:381px;width:54px;height:54px;box-sizing:border-box;border:4px solid #7f80e3;background:#fff;"></div>
<svg style="position:absolute;left:1390px;top:381px;" width="54" height="54" viewBox="0 0 54 54"><path d="M15 22 H39 M23 33 H39 M23 44 H39" stroke="#7f80e3" stroke-width="2.2" transform="translate(0,-6)"/></svg>
<div class="t" style="left:1463px;top:391.5px;font-size:36px;font-weight:700;color:#444;">Brainstorm</div>
<div class="t" style="left:1390.5px;top:464.0px;font-size:26px;font-weight:400;color:#444;">Ideas and planning for the next year</div>
<svg style="position:absolute;left:1390.0px;top:524.0px" width="44" height="44" viewBox="0 0 100 100"><use href="#av-john"/></svg>
<div class="t" style="left:1446.5px;top:533.0px;font-size:26px;font-weight:700;color:#444;">John Millar</div>
<svg style="position:absolute;left:1596px;top:541px;" width="23" height="16" viewBox="0 0 23 16"><path d="M2 3 L11.5 13 L21 3" stroke="#2c3040" stroke-width="3.5" fill="none"/></svg>
<div style="position:absolute;left:1340px;top:666px;width:1532px;height:11px;background:linear-gradient(rgba(0,0,0,.075),rgba(0,0,0,0));"></div>
<div class="t" style="left:1366.5px;top:619.0px;font-size:26px;font-weight:400;color:#444;">Discussions</div>
<div class="t" style="left:1562.5px;top:619.0px;font-size:26px;font-weight:400;color:#444;">Subtasks</div>
<div style="position:absolute;left:1678px;top:627px;width:12px;height:12px;border-radius:50%;background:#4b98b7;"></div>
<div class="t" style="left:1748px;top:619.0px;font-size:26px;font-weight:400;color:#444;">Files</div>
<div style="position:absolute;left:1811px;top:627px;width:12px;height:12px;border-radius:50%;background:#4b98b7;"></div>
<div class="t" style="left:1881px;top:619.0px;font-size:26px;font-weight:400;color:#444;">Followers</div>
<div style="position:absolute;left:2000px;top:627px;width:12px;height:12px;border-radius:50%;background:#4b98b7;"></div>
<div style="position:absolute;left:1340px;top:660px;width:197px;height:6px;background:#4b98b7;"></div>
<div style="position:absolute;left:1368px;top:728px;width:1504px;height:2px;background:#dfe1e8;"></div>
<svg style="position:absolute;left:1388.0px;top:756.0px" width="44" height="44" viewBox="0 0 100 100"><use href="#av-amanda"/></svg>
<div class="t" style="left:1448.6px;top:764.0px;font-size:26px;font-weight:700;color:#444;">Amanda Johnson</div>
<div class="t" style="left:1448.6px;top:812.0px;font-size:26px;font-weight:400;color:#444;">Hey @<b>John Millar</b>, check out my product</div>
<svg style="position:absolute;left:1937px;top:808px;" width="37" height="32" viewBox="0 0 37 32"><path d="M2 29 V4 Q2 2 4 2 H12 L15 6 H27 Q29 6 29 8 V12 M2 29 L8 13 H35 L29 29 Z" fill="none" stroke="#4e9a82" stroke-width="2.2" stroke-linejoin="round"/></svg>
<div class="t" style="left:1982px;top:812.0px;font-size:26px;font-weight:700;color:#444;">Launch</div>
<div style="position:absolute;left:1448px;top:880px;width:236px;height:146px;box-sizing:border-box;border:2px solid #ddd;background:#fff;"></div>
<svg style="position:absolute;left:1450px;top:882px;" width="232" height="142" viewBox="0 0 232 142"><rect x="0" y="16" width="35" height="107" fill="#f2f2f2"/><rect x="49" y="16" width="60" height="107" fill="#f2f2f2"/><rect x="123" y="16" width="60" height="107" fill="#efefef"/><rect x="197" y="16" width="35" height="107" fill="#f4f4f4"/><path d="M2 32 Q2 26 10 26 H16 Q22 26 22 32 Q22 38 16 38 L12 42 L12 38 Q2 38 2 32Z" fill="#ddd"/><rect x="0" y="50" width="16" height="3" fill="#999"/><rect x="0" y="56" width="22" height="2" fill="#ccc"/><rect x="0" y="60" width="20" height="2" fill="#ccc"/><rect x="0" y="76" width="30" height="8" fill="#777"/><rect x="0" y="89" width="30" height="8" fill="#777"/><rect x="0" y="102" width="30" height="8" fill="#4a86e8"/><circle cx="60" cy="37" r="3" fill="#bbb"/><rect x="66" y="33" width="30" height="7" rx="3" fill="#e0e0e0"/><rect x="74" y="45" width="26" height="5" rx="2" fill="#666"/><circle cx="60" cy="53" r="3" fill="#bbb"/><rect x="66" y="50" width="30" height="7" rx="3" fill="#e0e0e0"/><rect x="70" y="62" width="30" height="6" rx="3" fill="#666"/><rect x="53" y="78" width="28" height="3" fill="#aaa"/><rect x="53" y="84" width="46" height="2" fill="#ccc"/><rect x="53" y="88" width="40" height="2" fill="#ccc"/><rect x="54" y="103" width="50" height="8" fill="#4a86e8"/><rect x="128" y="26" width="22" height="2" fill="#888"/><rect x="128" y="30" width="22" height="1" fill="#4a86e8"/><rect x="127" y="38" width="34" height="3" fill="#999"/><circle cx="131" cy="50" r="4" fill="#bbb"/><rect x="138" y="47" width="20" height="2" fill="#999"/><rect x="138" y="52" width="16" height="2" fill="#ccc"/><circle cx="131" cy="70" r="4" fill="#bbb"/><rect x="138" y="67" width="20" height="2" fill="#999"/><rect x="138" y="72" width="16" height="2" fill="#ccc"/><circle cx="131" cy="90" r="4" fill="#bbb"/><rect x="138" y="87" width="20" height="2" fill="#999"/><rect x="138" y="92" width="16" height="2" fill="#ccc"/><circle cx="131" cy="110" r="4" fill="#bbb"/><circle cx="151" cy="118" r="2" fill="#4a86e8"/><rect x="197" y="28" width="22" height="1.5" fill="#777"/><rect x="200" y="38" width="12" height="3" fill="#999"/><rect x="199" y="48" width="26" height="32" fill="#999"/><rect x="228" y="48" width="4" height="32" fill="#999"/><rect x="207" y="58" width="9" height="8" fill="none" stroke="#ddd" stroke-width="1.5"/><rect x="220" y="90" width="10" height="4" fill="#999"/><circle cx="227" cy="107" r="4" fill="none" stroke="#aaa" stroke-width="1.5"/></svg>
<div class="t" style="left:1448.6px;top:1065.7px;font-size:24px;font-weight:400;color:#555;">Edited</div>
<div style="position:absolute;left:1536px;top:1073px;width:8px;height:8px;border-radius:50%;background:#a0a0a0;"></div>
<div class="t" style="left:1564.5px;top:1065.7px;font-size:24px;font-weight:400;color:#555;">Edit</div>
<div style="position:absolute;left:1625px;top:1073px;width:8px;height:8px;border-radius:50%;background:#a0a0a0;"></div>
<svg style="position:absolute;left:1652px;top:1062px;" width="25" height="26" viewBox="0 0 25 26"><g fill="#4b98b7"><rect x="0" y="11" width="6" height="15"/><path d="M8 12 L13 4 Q14 0 17 1 Q19 2 18 7 L17 10 H24 Q25.5 10 25.5 12 V22 Q25.5 26 21 26 H8Z"/></g><rect x="2" y="21" width="2" height="2" fill="#fff"/></svg>
<div class="t" style="left:1685.5px;top:1065.7px;font-size:24px;font-weight:400;color:#555;">Like</div>
<div style="position:absolute;left:1749px;top:1073px;width:8px;height:8px;border-radius:50%;background:#a0a0a0;"></div>
<svg style="position:absolute;left:1777px;top:1062px;" width="25" height="24" viewBox="0 0 25 24"><path d="M10.5 0.5 L0 9.5 L10.5 18 V12.8 Q18.5 12.3 21.5 23.5 Q27.5 5.5 10.5 5.8Z" fill="#4b98b7"/></svg>
<div class="t" style="left:1809.5px;top:1065.7px;font-size:24px;font-weight:400;color:#555;">Reply</div>
<div class="t" style="left:1926px;top:1069.1px;font-size:20px;font-weight:400;color:#666;">5/7/2021</div>
<div style="position:absolute;left:2039px;top:1074px;width:8px;height:8px;border-radius:50%;background:#a0a0a0;"></div>
<div class="t" style="left:2082px;top:1069.1px;font-size:20px;font-weight:400;color:#666;">Seen by <b>John</b> and <b>Amanda</b></div>
<div style="position:absolute;left:1368px;top:1134px;width:1504px;height:2px;background:#dfe1e8;"></div>
<div style="position:absolute;left:1368px;top:1145px;width:1459px;height:482px;background:#fff;box-shadow:0 3px 10px rgba(0,0,0,.11);"></div>
<svg style="position:absolute;left:1388.0px;top:1162.0px" width="44" height="44" viewBox="0 0 100 100"><use href="#av-amanda"/></svg>
<div class="t" style="left:1448.6px;top:1170.0px;font-size:26px;font-weight:700;color:#444;">Amanda Johnson</div>
<div class="t" style="left:1448.6px;top:1218.0px;font-size:26px;font-weight:400;color:#444;">@<b>team</b>, any ideas?</div>
<div class="t" style="left:1448.6px;top:1269.7px;font-size:24px;font-weight:400;color:#555;">Edited</div>
<div style="position:absolute;left:1536px;top:1277px;width:8px;height:8px;border-radius:50%;background:#a0a0a0;"></div>
<div class="t" style="left:1564.5px;top:1269.7px;font-size:24px;font-weight:400;color:#555;">Edit</div>
<div style="position:absolute;left:1625px;top:1277px;width:8px;height:8px;border-radius:50%;background:#a0a0a0;"></div>
<svg style="position:absolute;left:1652px;top:1266px;" width="25" height="26" viewBox="0 0 25 26"><g fill="#4b98b7"><rect x="0" y="11" width="6" height="15"/><path d="M8 12 L13 4 Q14 0 17 1 Q19 2 18 7 L17 10 H24 Q25.5 10 25.5 12 V22 Q25.5 26 21 26 H8Z"/></g><rect x="2" y="21" width="2" height="2" fill="#fff"/></svg>
<div class="t" style="left:1685.5px;top:1269.7px;font-size:24px;font-weight:400;color:#555;">Like</div>
<div style="position:absolute;left:1749px;top:1277px;width:8px;height:8px;border-radius:50%;background:#a0a0a0;"></div>
<svg style="position:absolute;left:1777px;top:1266px;" width="25" height="24" viewBox="0 0 25 24"><path d="M10.5 0.5 L0 9.5 L10.5 18 V12.8 Q18.5 12.3 21.5 23.5 Q27.5 5.5 10.5 5.8Z" fill="#4b98b7"/></svg>
<div class="t" style="left:1809.5px;top:1269.7px;font-size:24px;font-weight:400;color:#555;">Reply</div>
<div class="t" style="left:1926.5px;top:1273.1px;font-size:20px;font-weight:400;color:#666;">8/13/2021</div>
<div style="position:absolute;left:2050px;top:1278px;width:8px;height:8px;border-radius:50%;background:#a0a0a0;"></div>
<div class="t" style="left:2093px;top:1273.1px;font-size:20px;font-weight:400;color:#666;">Seen by <b>John</b> and <b>Amanda</b></div>
<div style="position:absolute;left:1406px;top:1326px;width:2px;height:140px;background:#d5d8e0;"></div>
<svg style="position:absolute;left:1432.0px;top:1326.0px" width="44" height="44" viewBox="0 0 100 100"><use href="#av-ryah"/></svg>
<div class="t" style="left:1495px;top:1334.0px;font-size:26px;font-weight:700;color:#444;">Ryah Wright</div>
<div class="t" style="left:1495px;top:1382.0px;font-size:26px;font-weight:400;color:#444;">App needs to feature profile stats.</div>
<svg style="position:absolute;left:1494px;top:1431px;" width="25" height="26" viewBox="0 0 25 26"><g fill="#4b98b7"><rect x="0" y="11" width="6" height="15"/><path d="M8 12 L13 4 Q14 0 17 1 Q19 2 18 7 L17 10 H24 Q25.5 10 25.5 12 V22 Q25.5 26 21 26 H8Z"/></g><rect x="2" y="21" width="2" height="2" fill="#fff"/></svg>
<div class="t" style="left:1526.5px;top:1434.7px;font-size:24px;font-weight:400;color:#555;">Like</div>
<div class="t" style="left:1626.5px;top:1438.1px;font-size:20px;font-weight:400;color:#666;">8/26/2021</div>
<div style="position:absolute;left:1750px;top:1443px;width:8px;height:8px;border-radius:50%;background:#a0a0a0;"></div>
<div class="t" style="left:1792px;top:1438.1px;font-size:20px;font-weight:400;color:#666;">Seen by <b>John</b>, <b>Ryah</b> and <b>Amanda</b></div>
<div style="position:absolute;left:1406px;top:1482px;width:2px;height:140px;background:#d5d8e0;"></div>
<svg style="position:absolute;left:1432.0px;top:1482.0px" width="44" height="44" viewBox="0 0 100 100"><use href="#av-john"/></svg>
<div class="t" style="left:1494px;top:1491.0px;font-size:26px;font-weight:700;color:#444;">John Millar</div>
<div class="t" style="left:1494px;top:1538.0px;font-size:26px;font-weight:400;color:#444;">Great idea. They should be able to share it with friends.</div>
<svg style="position:absolute;left:1494px;top:1588px;" width="25" height="26" viewBox="0 0 25 26"><g fill="#4b98b7"><rect x="0" y="11" width="6" height="15"/><path d="M8 12 L13 4 Q14 0 17 1 Q19 2 18 7 L17 10 H24 Q25.5 10 25.5 12 V22 Q25.5 26 21 26 H8Z"/></g><rect x="2" y="21" width="2" height="2" fill="#fff"/></svg>
<div class="t" style="left:1526px;top:1591.7px;font-size:24px;font-weight:400;color:#555;">Like</div>
<div style="position:absolute;left:1590px;top:1599px;width:8px;height:8px;border-radius:50%;background:#a0a0a0;"></div>
<svg style="position:absolute;left:1617px;top:1588px;" width="25" height="24" viewBox="0 0 25 24"><path d="M10.5 0.5 L0 9.5 L10.5 18 V12.8 Q18.5 12.3 21.5 23.5 Q27.5 5.5 10.5 5.8Z" fill="#4b98b7"/></svg>
<div class="t" style="left:1650px;top:1591.7px;font-size:24px;font-weight:400;color:#555;">Reply</div>
<div class="t" style="left:1766.5px;top:1595.1px;font-size:20px;font-weight:400;color:#666;">8/26/2021</div>
<div style="position:absolute;left:1890.5px;top:1600px;width:8px;height:8px;border-radius:50%;background:#a0a0a0;"></div>
<div class="t" style="left:1933px;top:1595.1px;font-size:20px;font-weight:400;color:#666;">Seen by <b>John</b> and <b>Amanda</b></div>
<div style="position:absolute;left:2848px;top:1230px;width:16px;height:415px;border-radius:8px;background:#cbcbcb;"></div>
<div style="position:absolute;left:1360px;top:1660px;width:1492px;height:78px;box-sizing:border-box;border:1.5px solid #cfcfcf;border-radius:3px;background:#fff;"></div>
<svg style="position:absolute;left:1377.0px;top:1677.0px" width="44" height="44" viewBox="0 0 100 100"><use href="#av-amanda"/></svg>
<div class="t" style="left:1438px;top:1686.0px;font-size:26px;font-weight:400;color:#a6a6a6;">Discuss this task with the team ...</div>
<div style="position:absolute;left:1340px;top:394px;width:20px;height:90px;overflow:hidden;"><svg style="position:absolute;left:-910px;top:0" width="926" height="90" viewBox="0 0 926 90"><path d="M1.5 1.5 H891 L922 45 L891 88.5 H1.5Z" fill="#f1f1fc" stroke="#7f80e3" stroke-width="3"/></svg></div>
<div style="position:absolute;left:2184px;top:354px;width:900px;height:928px;background:#fff;box-shadow:-1px 6px 16px rgba(0,0,0,.2);border-radius:4px;"></div>
<svg style="position:absolute;left:2402px;top:390px;" width="33" height="50" viewBox="0 0 33 50"><path d="M29 3 L5 25 L29 47" stroke="#4b98b7" stroke-width="6" fill="none" stroke-linecap="round" stroke-linejoin="round"/></svg>
<svg style="position:absolute;left:2773px;top:390px;" width="33" height="50" viewBox="0 0 33 50"><path d="M4 3 L28 25 L4 47" stroke="#4b98b7" stroke-width="6" fill="none" stroke-linecap="round" stroke-linejoin="round"/></svg>
<div class="t" style="left:2103.5px;width:1000px;text-align:center;top:403.0px;font-size:26px;font-weight:700;color:#444;">January 2022</div>
<div class="t" style="left:1782px;width:1000px;text-align:center;top:514.0px;font-size:26px;font-weight:700;color:#a6a6a6;">SUN</div>
<div class="t" style="left:1886px;width:1000px;text-align:center;top:514.0px;font-size:26px;font-weight:700;color:#a6a6a6;">MON</div>
<div class="t" style="left:1990px;width:1000px;text-align:center;top:514.0px;font-size:26px;font-weight:700;color:#a6a6a6;">TUE</div>
<div class="t" style="left:2094px;width:1000px;text-align:center;top:514.0px;font-size:26px;font-weight:700;color:#a6a6a6;">WED</div>
<div class="t" style="left:2197.5px;width:1000px;text-align:center;top:514.0px;font-size:26px;font-weight:700;color:#a6a6a6;">THU</div>
<div class="t" style="left:2301px;width:1000px;text-align:center;top:514.0px;font-size:26px;font-weight:700;color:#a6a6a6;">FRI</div>
<div class="t" style="left:2405.5px;width:1000px;text-align:center;top:514.0px;font-size:26px;font-weight:700;color:#a6a6a6;">SAT</div>
<div style="position:absolute;left:2256px;top:574px;width:688px;height:7px;background:#f3f6fb;"></div>
<div style="position:absolute;left:2256px;top:1172px;width:688px;height:7px;background:#f3f6fb;"></div>
<div style="position:absolute;left:2450px;top:964px;width:80px;height:80px;background:#fff;box-shadow:0 0 6px rgba(80,120,240,.35);"></div>
<div style="position:absolute;left:2658px;top:964px;width:80px;height:80px;background:#578cf0;"></div>
<div class="t" style="left:2405.5px;width:1000px;text-align:center;top:638.5px;font-size:26px;font-weight:700;color:#444;">1</div>
<div class="t" style="left:1782px;width:1000px;text-align:center;top:727.0px;font-size:26px;font-weight:700;color:#444;">2</div>
<div class="t" style="left:1886px;width:1000px;text-align:center;top:727.0px;font-size:26px;font-weight:700;color:#444;">3</div>
<div class="t" style="left:1990px;width:1000px;text-align:center;top:727.0px;font-size:26px;font-weight:700;color:#444;">4</div>
<div class="t" style="left:2094px;width:1000px;text-align:center;top:727.0px;font-size:26px;font-weight:700;color:#444;">5</div>
<div class="t" style="left:2197.5px;width:1000px;text-align:center;top:727.0px;font-size:26px;font-weight:700;color:#444;">6</div>
<div class="t" style="left:2301px;width:1000px;text-align:center;top:727.0px;font-size:26px;font-weight:700;color:#444;">7</div>
<div class="t" style="left:2405.5px;width:1000px;text-align:center;top:727.0px;font-size:26px;font-weight:700;color:#444;">8</div>
<div class="t" style="left:1782px;width:1000px;text-align:center;top:814.5px;font-size:26px;font-weight:700;color:#444;">9</div>
<div class="t" style="left:1886px;width:1000px;text-align:center;top:814.5px;font-size:26px;font-weight:700;color:#444;">10</div>
<div class="t" style="left:1990px;width:1000px;text-align:center;top:814.5px;font-size:26px;font-weight:700;color:#444;">11</div>
<div class="t" style="left:2094px;width:1000px;text-align:center;top:814.5px;font-size:26px;font-weight:700;color:#444;">12</div>
<div class="t" style="left:2197.5px;width:1000px;text-align:center;top:814.5px;font-size:26px;font-weight:700;color:#444;">13</div>
<div class="t" style="left:2301px;width:1000px;text-align:center;top:814.5px;font-size:26px;font-weight:700;color:#444;">14</div>
<div class="t" style="left:2405.5px;width:1000px;text-align:center;top:814.5px;font-size:26px;font-weight:700;color:#444;">15</div>
<div class="t" style="left:1782px;width:1000px;text-align:center;top:902.5px;font-size:26px;font-weight:700;color:#444;">16</div>
<div class="t" style="left:1886px;width:1000px;text-align:center;top:902.5px;font-size:26px;font-weight:700;color:#444;">17</div>
<div class="t" style="left:1990px;width:1000px;text-align:center;top:902.5px;font-size:26px;font-weight:700;color:#444;">18</div>
<div class="t" style="left:2094px;width:1000px;text-align:center;top:902.5px;font-size:26px;font-weight:700;color:#444;">19</div>
<div class="t" style="left:2197.5px;width:1000px;text-align:center;top:902.5px;font-size:26px;font-weight:700;color:#444;">20</div>
<div class="t" style="left:2301px;width:1000px;text-align:center;top:902.5px;font-size:26px;font-weight:700;color:#444;">21</div>
<div class="t" style="left:2405.5px;width:1000px;text-align:center;top:902.5px;font-size:26px;font-weight:700;color:#444;">22</div>
<div class="t" style="left:1782px;width:1000px;text-align:center;top:990.5px;font-size:26px;font-weight:700;color:#444;">23</div>
<div class="t" style="left:1886px;width:1000px;text-align:center;top:990.5px;font-size:26px;font-weight:700;color:#444;">24</div>
<div class="t" style="left:1990px;width:1000px;text-align:center;top:990.5px;font-size:26px;font-weight:700;color:#444;">25</div>
<div class="t" style="left:2094px;width:1000px;text-align:center;top:990.5px;font-size:26px;font-weight:700;color:#444;">26</div>
<div class="t" style="left:2197.5px;width:1000px;text-align:center;top:990.5px;font-size:26px;font-weight:700;color:#fff;">27</div>
<div class="t" style="left:2301px;width:1000px;text-align:center;top:990.5px;font-size:26px;font-weight:700;color:#444;">28</div>
<div class="t" style="left:2405.5px;width:1000px;text-align:center;top:990.5px;font-size:26px;font-weight:700;color:#444;">29</div>
<div class="t" style="left:1782px;width:1000px;text-align:center;top:1078.5px;font-size:26px;font-weight:700;color:#444;">30</div>
<div class="t" style="left:1886px;width:1000px;text-align:center;top:1078.5px;font-size:26px;font-weight:700;color:#444;">31</div>
<svg style="position:absolute;left:2256px;top:1210px;" width="33" height="34" viewBox="0 0 33 34"><path d="M4 15 A13 13 0 0 1 27 8" stroke="#7fb8cf" stroke-width="5" fill="none"/><path d="M30 1 V13 H18Z" fill="#7fb8cf"/><path d="M29 19 A13 13 0 0 1 6 26" stroke="#7fb8cf" stroke-width="5" fill="none"/><path d="M3 33 V21 H15Z" fill="#7fb8cf"/></svg>
<div class="t" style="right:77px;top:1213.6px;font-size:27px;font-weight:700;color:#3b5f8e;">Clear All</div>
<div style="position:absolute;left:0px;top:0px;width:1px;height:1780px;background:#3a5968;"></div>
<svg style="position:absolute;left:0px;top:1762px;" width="18" height="18" viewBox="0 0 18 18"><path d="M0 0 A18 18 0 0 0 18 18 L0 18Z" fill="#1d0f5c"/><path d="M0 0 A18 18 0 0 0 18 18" fill="none" stroke="#000" stroke-width="1.5" opacity=".6"/></svg>
<svg style="position:absolute;left:3002px;top:1762px;" width="18" height="18" viewBox="0 0 18 18"><path d="M18 0 A18 18 0 0 1 0 18 L18 18Z" fill="#1d0f5c"/><path d="M18 0 A18 18 0 0 1 0 18" fill="none" stroke="#000" stroke-width="1.5" opacity=".6"/></svg>
</body></html>
